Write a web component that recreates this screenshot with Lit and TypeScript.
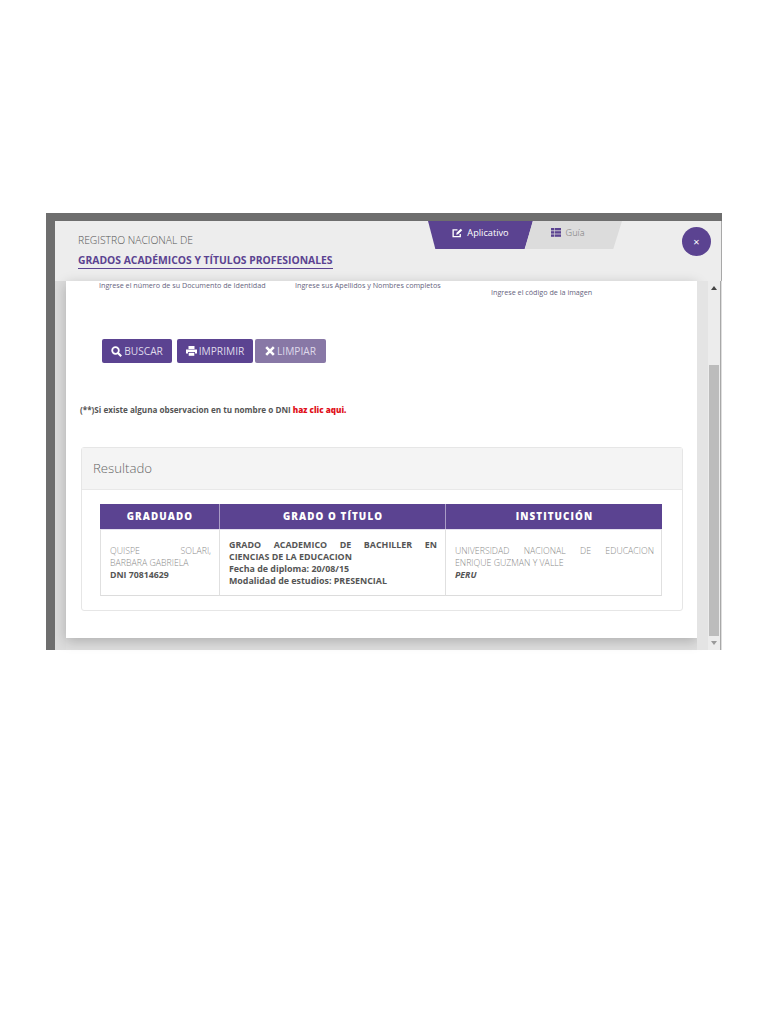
import { LitElement, html, css } from "lit";
import { customElement } from "lit/decorators.js";

@customElement("app-root")
export class AppRoot extends LitElement {
  static styles = css`
    :host { display: block; width: 768px; height: 1024px; background: #fff; font-family: "Open Sans", sans-serif; color: #555; overflow: hidden; }
    .page { padding: 213px 46px 0 46px; }
    .frame { width: 676px; height: 437px; background: #6e6e6e; padding: 8px 0 0 9px; box-sizing: border-box; display: flex; flex-direction: column; }
    .head { height: 60px; flex: none; background: #ededed; display: flex; padding-left: 23px; box-sizing: border-box; border-right: 1px solid #a8a8a8; }
    .brand { width: 355px; padding-top: 12px; }
    .brand .l1 { font-size: 10.35px; line-height: 14px; color: #555; font-weight: 300; }
    .brand .l2 { display: inline-block; font-size: 10.35px; line-height: 14px; margin-top: -2px; font-weight: 700; color: #5b4391; border-bottom: 1.5px solid #5b4391; padding-bottom: 1px; white-space: nowrap; }
    .tabs { display: flex; margin-left: -5px; height: 28px; }
    .tab { height: 28px; display: flex; align-items: center; justify-content: center; gap: 4px; font-size: 9.2px; box-sizing: border-box; padding-bottom: 5px; }
    .tab.on { width: 105px; background: #5b4391; color: #fff; clip-path: polygon(0 0, 100% 0, 92% 100%, 7% 100%); }
    .tab.off { width: 97px; margin-left: -8px; padding-right: 11px; background: #dcdcdc; color: #777; font-weight: 300; clip-path: polygon(8% 0, 100% 0, 91% 100%, 0 100%); }
    .close { width: 29px; height: 29px; border-radius: 50%; background: #5b4391; color: #fff; display: flex; align-items: center; justify-content: center; font-size: 11px; margin: 6px 0 0 60px; flex: none; }
    .body { flex: 1; min-height: 0; display: flex; background: #dedede; }
    .strip { width: 11px; flex: none; background: #dcdcdc; }
    .panel { width: 631px; height: 357px; flex: none; background: #fff; box-shadow: 0 3px 12px rgba(0,0,0,.22); box-sizing: border-box; padding: 0 14px 0 15px; }
    .hints { display: flex; font-size: 7.2px; color: #66647e; height: 14px; }
    .hints span { white-space: nowrap; }
    .hint1 { margin-left: 18px; width: 196px; line-height: 9px; }
    .hint2 { width: 196px; line-height: 9px; }
    .hint3 { padding-top: 7px; line-height: 9px; }
    .buttons { display: flex; gap: 5px; margin: 44px 0 0 21px; }
    .btn { height: 24px; box-sizing: border-box; border-radius: 2px; background: #5b4391; color: #dfd9ea; font-size: 10.2px; display: flex; align-items: center; justify-content: center; gap: 2px; }
    .btn.b1 { width: 70px; } .btn.b2 { width: 76px; margin-right: -3px; } .btn.b3 { width: 71px; background: #8878a6; }
    .note { margin: 41px 0 0 -1px; font-size: 8.15px; line-height: 12px; font-weight: 700; color: #555; }
    .note b { color: #e0101a; }
    .card { margin-top: 31px; width: 602px; height: 164px; box-sizing: border-box; border: 1px solid #e6e6e6; border-radius: 3px; background: #fff; }
    .card-h { height: 42px; background: #f4f4f4; border-bottom: 1px solid #e8e8e8; box-sizing: border-box; padding-left: 11px; font-size: 13.2px; line-height: 41px; font-weight: 300; color: #666; }
    .tbl { margin: 14px 0 0 18px; width: 562px; display: grid; grid-template-columns: 119px 226px 217px; }
    .th { height: 25px; padding-left: 1px; background: #5b4391; color: #fff; font-size: 9.8px; font-weight: 800; letter-spacing: 1.1px; display: flex; align-items: center; justify-content: center; border-left: 1px solid #a99cc6; box-sizing: border-box; }
    .th:first-child { border-left: 0; }
    .td { height: 67px; border-top: 1px solid #e4e0ee; border-bottom: 1px solid #dcdcdc; border-left: 1px solid #e0e0e0; box-sizing: border-box; font-size: 8.75px; line-height: 12px; color: #8a8a8a; padding: 15px 8px 0 9px; font-weight: 300; text-align: justify; }
    .td.last { border-right: 1px solid #e0e0e0; padding-right: 7px; }
    .td.mid { padding-top: 9px; font-weight: 700; color: #555; font-size: 8.9px; }
    .td b { font-weight: 700; color: #555; }
    .td i { font-weight: 700; color: #555; }
    .j { text-align: justify; text-align-last: justify; display: block; }
    .gutter { width: 11px; flex: none; background: #e4e4e4; }
    .sb { width: 13px; flex: none; background: #ececec; display: flex; flex-direction: column; align-items: center; border-right: 1px solid #a8a8a8; box-sizing: border-box; height: 369px; }
    .arrow { height: 14px; flex: none; display: flex; align-items: center; justify-content: center; }
    .track { flex: 1; width: 100%; display: flex; flex-direction: column; padding: 0 1px; box-sizing: border-box; }
    .thumb { margin-top: 70px; flex: 1; background: #bcbcbc; }
    svg { display: block; }
  `;

  render() {
    return html`<div class="page"><div class="frame">
      <div class="head">
        <div class="brand">
          <div class="l1">REGISTRO NACIONAL DE</div>
          <div class="l2">GRADOS ACADÉMICOS Y TÍTULOS PROFESIONALES</div>
        </div>
        <div class="tabs">
          <div class="tab on">
            <svg width="11" height="10" viewBox="0 0 12 11" fill="none" stroke="#fff" stroke-width="1.5"><path d="M9 6.5V9.5H1.2V2H6"/><path d="M4.5 7.5L5 5.3L9.6 .8L11.2 2.4L6.7 7Z" fill="#fff" stroke="none"/></svg>
            <span>Aplicativo</span>
          </div>
          <div class="tab off">
            <svg width="10" height="9" viewBox="0 0 10 9" fill="#5b4391"><rect y="0" width="3" height="2.4"/><rect x="3.6" y="0" width="6.4" height="2.4"/><rect y="3.2" width="3" height="2.4"/><rect x="3.6" y="3.2" width="6.4" height="2.4"/><rect y="6.4" width="3" height="2.4"/><rect x="3.6" y="6.4" width="6.4" height="2.4"/></svg>
            <span>Guía</span>
          </div>
        </div>
        <div class="close">×</div>
      </div>
      <div class="body">
        <div class="strip"></div>
        <div class="panel">
          <div class="hints">
            <span class="hint1">Ingrese el número de su Documento de Identidad</span>
            <span class="hint2">Ingrese sus Apellidos y Nombres completos</span>
            <span class="hint3">Ingrese el código de la imagen</span>
          </div>
          <div class="buttons">
            <div class="btn b1"><svg width="11" height="11" viewBox="0 0 11 11" fill="none" stroke="#fff" stroke-width="1.8"><circle cx="4.5" cy="4.5" r="3.3"/><path d="M7 7L10.2 10.2" stroke-width="2.2"/></svg>BUSCAR</div>
            <div class="btn b2"><svg width="11" height="10" viewBox="0 0 11 10" fill="#fff"><rect x="2.5" y="0" width="6" height="3"/><path d="M0 3.6H11V7.6H9V6H2V7.6H0Z"/><rect x="2.7" y="6.8" width="5.6" height="3"/></svg>IMPRIMIR</div>
            <div class="btn b3"><svg width="10" height="10" viewBox="0 0 10 10" stroke="#fff" stroke-width="2.6"><path d="M1.2 1.2L8.8 8.8M8.8 1.2L1.2 8.8"/></svg>LIMPIAR</div>
          </div>
          <div class="note">(**)Si existe alguna observacion en tu nombre o DNI <b>haz clic aqui.</b></div>
          <div class="card">
            <div class="card-h">Resultado</div>
            <div class="tbl">
              <div class="th">GRADUADO</div><div class="th">GRADO O TÍTULO</div><div class="th">INSTITUCIÓN</div>
              <div class="td"><span class="j">QUISPE SOLARI,</span>BARBARA GABRIELA<br><b>DNI 70814629</b></div>
              <div class="td mid"><span class="j">GRADO ACADEMICO DE BACHILLER EN</span>CIENCIAS DE LA EDUCACION<br>Fecha de diploma: 20/08/15<br>Modalidad de estudios: PRESENCIAL</div>
              <div class="td last"><span class="j">UNIVERSIDAD NACIONAL DE EDUCACION</span>ENRIQUE GUZMAN Y VALLE<br><i>PERU</i></div>
            </div>
          </div>
        </div>
        <div class="gutter"></div>
        <div class="sb">
          <div class="arrow"><svg width="6" height="4" viewBox="0 0 6 4" fill="#444"><path d="M3 0L6 4H0Z"/></svg></div>
          <div class="track"><div class="thumb"></div></div>
          <div class="arrow"><svg width="6" height="4" viewBox="0 0 6 4" fill="#999"><path d="M0 0H6L3 4Z"/></svg></div>
        </div>
      </div>
    </div></div>`;
  }
}
